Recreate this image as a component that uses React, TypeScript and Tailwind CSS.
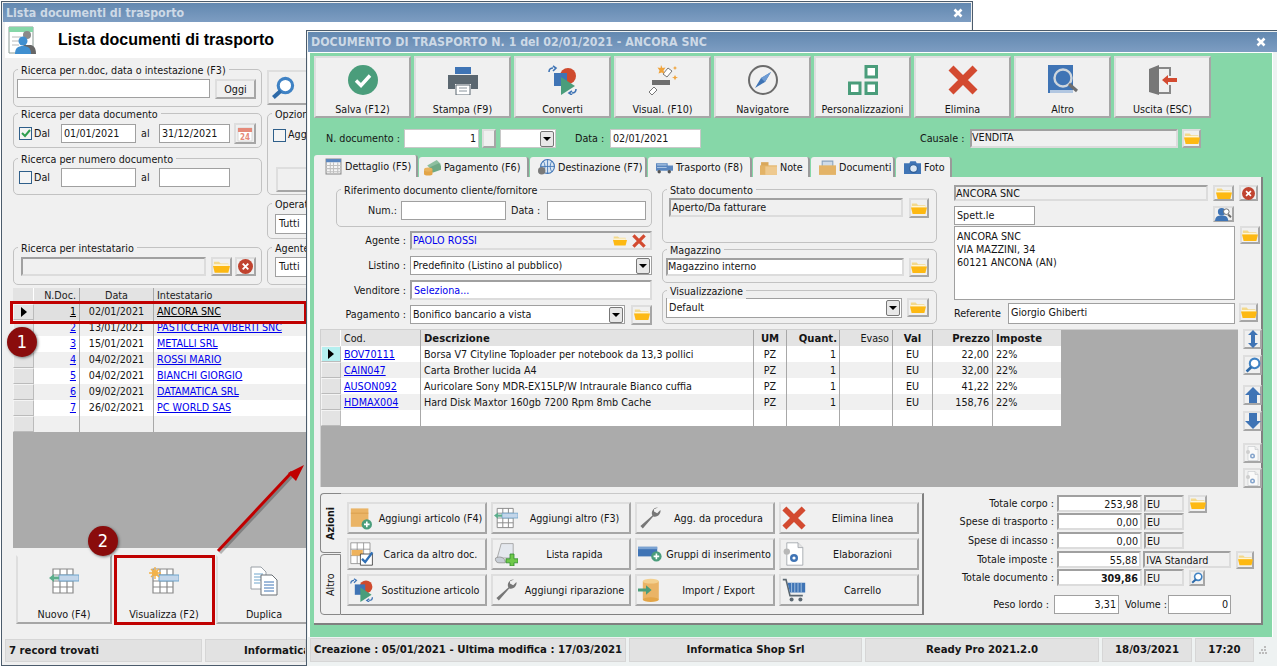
import type { ReactNode } from "react";

const raised =
  "border-2 border-t-[#dedede] border-l-[#dedede] border-r-[#a6a6a6] border-b-[#a6a6a6] bg-[#f0f0f0]";
const sunken =
  "border-2 border-t-[#a0a0a0] border-l-[#a0a0a0] border-r-[#dcdcdc] border-b-[#dcdcdc] bg-[#f0f0f0]";
const field = "border border-[#a0a0a0] bg-white leading-[18px]";

type Box = { className?: string; children?: ReactNode };

function Btn({ className = "", children }: Box) {
  return <div className={`flex shrink-0 items-center justify-center ${raised} ${className}`}>{children}</div>;
}

function Group({ label, className = "", children }: Box & { label: string }) {
  return (
    <div className={`relative shrink-0 rounded-[5px] border border-[#c2c2c2] ${className}`}>
      <span className="absolute left-[4px] top-[-6px] bg-[#f0f0f0] px-[3px] leading-[14px] whitespace-nowrap">{label}</span>
      {children}
    </div>
  );
}

function Svg({ s = 30, children }: { s?: number; children: ReactNode }) {
  return (
    <svg width={s} height={s} viewBox="0 0 30 30" className="shrink-0">
      {children}
    </svg>
  );
}

const Close = () => (
  <svg width="10" height="10" viewBox="0 0 10 10" className="shrink-0">
    <path d="M1.5 1.5l7 7M8.5 1.5l-7 7" stroke="#fff" strokeWidth="2.6" />
  </svg>
);
const Check = () => (
  <Svg>
    <circle cx="15" cy="15" r="15" fill="#4a9d7b" />
    <path d="M8 15.5l5 5 9-10" fill="none" stroke="#fff" strokeWidth="3.4" />
  </Svg>
);
const Printer = () => (
  <Svg>
    <path d="M7 2h16v7H7z" fill="#3f74b5" />
    <path d="M0 10h30v14H23v-5H7v5H0z" fill="#5b6770" />
    <path d="M8 20h14v10H8z" fill="#fff" stroke="#5b6770" />
    <path d="M11 23h8M11 26h8" stroke="#8a949c" />
  </Svg>
);
const Convert = ({ s = 30 }: { s?: number }) => (
  <Svg s={s}>
    <circle cx="20" cy="11" r="8" fill="#cf4a2e" />
    <path d="M6 8h13v13H6z" fill="#3f74b5" />
    <path d="M13 12l14 9-14 9z" fill="#4a9d7b" />
    <path d="M1 7c0-3 2-4 4-4M5 1l3 2-3 3M28 24c0 3-2 4-4 4M24 26l-3 2 3 2" fill="none" stroke="#3f74b5" strokeWidth="1.6" />
  </Svg>
);
const Wand = () => (
  <Svg>
    <path d="M4 15h18v5H4z" fill="#6e6e6e" />
    <path d="M20 3l4 3-5 6-4-3zM6 22l3 3-5 5-3-3z" fill="#fff" stroke="#777" />
    <path d="M13 0l1.5 3 3-.5-2 3 1 3-3-1-3 1 1-3-2-3 3 .5z" fill="#f0a33a" />
    <path d="M27 10l1 2 2 .5-2 .8-1 2-1-2-2-.8 2-.5zM27 1l.8 1.5 1.5.5-1.5.5-.8 1.5-.8-1.5-1.5-.5 1.5-.5z" fill="#f0a33a" />
  </Svg>
);
const Compass = () => (
  <Svg>
    <circle cx="15" cy="15" r="14" fill="none" stroke="#6b6b6b" strokeWidth="2" />
    <path d="M23 7l-6 10-10 6 6-10z" fill="#3f74b5" />
    <path d="M23 7l-10 6 4 4z" fill="#6d9bd4" />
  </Svg>
);
const Squares = () => (
  <Svg>
    <path d="M18 1.5h10.5V12H18zM1.5 18H12v10.5H1.5zM18 18h10.5v10.5H18z" fill="#fff" stroke="#4a9d7b" strokeWidth="3" />
  </Svg>
);
const Cross = ({ s = 30 }: { s?: number }) => (
  <Svg s={s}>
    <path d="M3 3l24 24M27 3L3 27" stroke="#d34a30" strokeWidth="7" />
  </Svg>
);
const BookSearch = () => (
  <Svg>
    <path d="M0 0h25v28H0z" fill="#3f74b5" />
    <path d="M2 25h23v3H2z" fill="#fff" opacity=".6" />
    <circle cx="15" cy="13" r="8.5" fill="#3f74b5" stroke="#cfd6dc" strokeWidth="2.4" />
    <path d="M21 19l8 7" stroke="#6e6e6e" strokeWidth="3" />
  </Svg>
);
const Exit = () => (
  <Svg>
    <path d="M1 4l10-4v30l-10-3z" fill="#777" />
    <path d="M11 3h11v8M22 20v8H11" fill="none" stroke="#888" strokeWidth="2" />
    <path d="M14 15l6-5v3h9v4h-9v3z" fill="#d34a30" />
  </Svg>
);
const Folder = ({ s = 17 }: { s?: number }) => (
  <svg width={s} height={s * 0.8} viewBox="0 0 20 16" className="shrink-0">
    <path d="M1 2h6l2 2h9v4H1z" fill="#f3d98c" />
    <path d="M1 5h17v2H1z" fill="#fff6d8" />
    <path d="M0 7h20l-2 8H2z" fill="#fdb913" />
  </svg>
);
const Cancel = ({ s = 15 }: { s?: number }) => (
  <svg width={s} height={s} viewBox="0 0 16 16" className="shrink-0">
    <circle cx="8" cy="8" r="8" fill="#c0432f" />
    <path d="M5 5l6 6M11 5l-6 6" stroke="#fff" strokeWidth="2" />
  </svg>
);
const Search = ({ s = 18 }: { s?: number }) => (
  <svg width={s} height={s} viewBox="0 0 20 20" className="shrink-0">
    <circle cx="12" cy="8" r="6" fill="#fff" stroke="#3f82c4" strokeWidth="2.6" />
    <path d="M8 12.5L2 18" stroke="#2e6aa8" strokeWidth="3.4" />
  </svg>
);
const TableIco = ({ s = 17 }: { s?: number }) => (
  <svg width={s} height={s} viewBox="0 0 16 16" className="shrink-0">
    <path d="M1 1h14v14H1z" fill="#f6f6f6" stroke="#8a8a8a" />
    <path d="M1 1h14v3H1z" fill="#5a86bf" />
    <path d="M1 7h14M1 10h14M1 13h14M5 4v11M8 4v11M12 4v11" stroke="#c0c0c0" />
  </svg>
);
const Coins = () => (
  <svg width={17} height={17} viewBox="0 0 16 16" className="shrink-0">
    <path d="M3 6l9-5 4 4-9 5z" fill="#8dbf9f" />
    <path d="M5 8l9-4 2 2v4l-8 3z" fill="#6fa985" />
    <ellipse cx="4" cy="10" rx="4" ry="2" fill="#e8b35d" />
    <path d="M0 10v4c0 2 8 2 8 0v-4c0 2-8 2-8 0z" fill="#e3a547" />
  </svg>
);
const Globe = () => (
  <svg width={17} height={17} viewBox="0 0 16 16" className="shrink-0">
    <circle cx="9" cy="7" r="6.5" fill="#dbe7f3" stroke="#3f74b5" />
    <path d="M2.5 7h13M9 .5v13M5 2c2 3 2 7 0 10M13 2c-2 3-2 7 0 10" fill="none" stroke="#3f74b5" strokeWidth=".8" />
    <circle cx="3.5" cy="11" r="3.5" fill="#7a7a7a" />
  </svg>
);
const Truck = () => (
  <svg width={17} height={17} viewBox="0 0 16 16" className="shrink-0">
    <path d="M0 4h11v7H0zM11 6h5v5h-5z" fill="#5a86bf" />
    <path d="M1 5.5h9M1 8h9" stroke="#a9c3e2" />
    <circle cx="3" cy="12" r="1.6" fill="#555" />
    <circle cx="12.5" cy="12" r="1.6" fill="#555" />
  </svg>
);
const TanFolder = ({ photo = false }: { photo?: boolean }) => (
  <svg width={17} height={16} viewBox="0 0 16 15" className="shrink-0">
    {photo && <path d="M3 1h10v6H3z" fill="#cfdbe8" stroke="#8aa2bc" />}
    {!photo && <path d="M1 2h7v4H1z" fill="#d9a85c" />}
    <path d="M0 5h16v9H0z" fill="#e3b367" />
    {!photo && <path d="M5 6h11v8H5z" fill="#eec98f" />}
  </svg>
);
const Camera = () => (
  <svg width={17} height={15} viewBox="0 0 16 14" className="shrink-0">
    <path d="M0 3h5l1-2h5l1 2h4v10H0z" fill="#3f74b5" />
    <circle cx="9" cy="8" r="3.6" fill="#dbe7f3" stroke="#2a5a94" />
  </svg>
);
const Plus = ({ x, y }: { x: number; y: number }) => (
  <g>
    <circle cx={x} cy={y} r="6.5" fill="#4a9d7b" />
    <path d={`M${x - 3.5} ${y}h7M${x} ${y - 3.5}v7`} stroke="#fff" strokeWidth="2" />
  </g>
);
const BoxPlus = () => (
  <Svg s={24}>
    <path d="M1 3h22v23H1z" fill="#eab466" />
    <path d="M1 9h22" stroke="#d69a48" />
    <Plus x={21} y={23} />
  </Svg>
);
const GridArrow = ({ s = 24, sun = false }: { s?: number; sun?: boolean }) => (
  <Svg s={s}>
    <path d="M4 3h20v24H4zM4 9h20M4 15h20M4 21h20M11 3v24M18 3v24" fill="#fff" stroke="#8a8a8a" strokeWidth="1.2" />
    <path d="M10 9h20v6H10z" fill="#c3d6ea" stroke="#6fa5cc" />
    {sun ? (
      <g>
        <path d="M6 1v12M0 7h12M2 3l8 8M10 3l-8 8" stroke="#f3b34a" strokeWidth="1.4" />
        <circle cx="6" cy="7" r="3" fill="#f3b34a" />
      </g>
    ) : (
      <path d="M0 12l5-4v2.5h5v3H5V16z" fill="#5cae8c" />
    )}
  </Svg>
);
const Wrench = () => (
  <Svg s={24}>
    <path d="M25 2a7 7 0 0 0-7 10L3 25l3 3 13-15a7 7 0 0 0 9-8l-4 4-4-2 0-3z" fill="#777" />
  </Svg>
);
const GridCheck = () => (
  <Svg s={24}>
    <path d="M1 1h24v26H1zM1 9h24M1 17h24M9 1v26M17 1v26" fill="#fff" stroke="#8a8a8a" />
    <path d="M2 10h14v7H2z" fill="#eeb25c" />
    <path d="M13 15h15v14H13z" fill="#fff" stroke="#333" />
    <path d="M15 21l4 4 9-12" fill="none" stroke="#2f6fb5" strokeWidth="3" />
  </Svg>
);
const ScrollPlus = () => (
  <Svg s={24}>
    <path d="M9 2h15v18H4z" fill="#e4e8ee" stroke="#9a9a9a" />
    <path d="M2 20c4-2 10-2 12 4v2H6c-3 0-5-3-4-6z" fill="#c8ced6" stroke="#8f8f8f" />
    <path d="M20 15h5v6h5v5h-5v4h-5v-4h-5v-5h5z" fill="#6fc84a" stroke="#2f8a2f" />
  </Svg>
);
const RectPlus = () => (
  <Svg s={24}>
    <path d="M0 6h24v12H0z" fill="#3f74b5" />
    <path d="M0 6h24v3H0z" fill="#7aa2d2" />
    <Plus x={23} y={18} />
  </Svg>
);
const PageGear = ({ s = 24, faded = false }: { s?: number; faded?: boolean }) => (
  <Svg s={s}>
    <g opacity={faded ? 0.6 : 1}>
      <path d="M6 1h14l6 6v22H6z" fill="#fff" stroke="#9aa0a6" />
      <path d="M20 1v6h6" fill="#e4e4e4" stroke="#9aa0a6" />
      <circle cx="6" cy="12" r="4" fill="#b8b8b8" />
      <circle cx="15" cy="20" r="5" fill="#3f74b5" />
      <circle cx="15" cy="20" r="2" fill="#fff" />
    </g>
  </Svg>
);
const CylArrow = () => (
  <Svg s={24}>
    <path d="M6 4h20v23H6z" fill="#eab466" />
    <ellipse cx="16" cy="4" rx="10" ry="3" fill="#f3d08f" />
    <ellipse cx="16" cy="27" rx="10" ry="3" fill="#e3a547" />
    <path d="M0 13h10v-4l7 6-7 6v-4H0z" fill="#4a9d7b" />
  </Svg>
);
const Cart = () => (
  <Svg s={24}>
    <path d="M1 2h4l5 20h16" fill="none" stroke="#5b6770" strokeWidth="2" />
    <path d="M7 6h22v12H10z" fill="#3f74b5" />
    <path d="M12 6v12M16 6v12M20 6v12M24 6v12" stroke="#b8cfe8" />
    <circle cx="12" cy="27" r="2.5" fill="#5b6770" />
    <circle cx="23" cy="27" r="2.5" fill="#5b6770" />
  </Svg>
);
const UserSearch = () => (
  <svg width={17} height={14} viewBox="0 0 18 15" className="shrink-0">
    <circle cx="7" cy="5" r="4" fill="#3f74b5" />
    <path d="M0 15c0-5 3-6 7-6s7 1 7 6z" fill="#3f74b5" />
    <circle cx="12" cy="5" r="3" fill="#fff" stroke="#666" />
    <path d="M14 8l3 3" stroke="#666" strokeWidth="2" />
  </svg>
);
const ArrowV = ({ up }: { up: boolean }) => (
  <svg width={16} height={16} viewBox="0 0 16 16" className="shrink-0">
    <path d={up ? "M8 0l8 8h-4v8H4V8H0z" : "M8 16L0 8h4V0h8v8h4z"} fill="#3f74b5" />
  </svg>
);
const UpDown = () => (
  <svg width={10} height={18} viewBox="0 0 10 18" className="shrink-0">
    <path d="M5 0l5 5H7v8h3l-5 5-5-5h3V5H0z" fill="#3f74b5" />
  </svg>
);
const Calendar = () => (
  <svg width={16} height={16} viewBox="0 0 16 16" className="shrink-0">
    <path d="M1 2h14v13H1z" fill="#fff" stroke="#d8d8d8" />
    <path d="M1 2h14v4H1z" fill="#e58a7a" />
    <text x="8" y="14" textAnchor="middle" fontSize="8" fontWeight="700" fill="#e58a7a">24</text>
  </svg>
);
const Clipboard = () => (
  <svg width={30} height={28} viewBox="0 0 30 28" className="shrink-0">
    <path d="M1 1h24v26H1z" fill="#fff" stroke="#8a9a94" />
    <path d="M1 1h24v5H1z" fill="#86d7a8" />
    <path d="M4 11h9M4 15h8M4 19h7" stroke="#b8b8b8" />
    <circle cx="19" cy="9" r="4" fill="#8a8a8a" />
    <path d="M12 28c0-7 3-9 5-9h5c3 0 6 2 6 9z" fill="#666" />
    <circle cx="15" cy="15" r="4.5" fill="#3f8fd0" />
    <path d="M7 28c0-6 3-8 8-8s8 2 8 8z" fill="#3f8fd0" />
  </svg>
);
const Duplicate = () => (
  <svg width={28} height={30} viewBox="0 0 28 30" className="shrink-0">
    <path d="M1 1h10l5 5v17H1z" fill="#fff" stroke="#9aa0a6" />
    <path d="M4 8h9M4 11h9M4 14h9M4 17h6" stroke="#6fa5cc" />
    <path d="M11 9h11l5 5v15H11z" fill="#fff" stroke="#6a7076" />
    <path d="M14 16h10M14 19h10M14 22h10M14 25h10" stroke="#3f74b5" />
  </svg>
);

const Combo = ({ className = "", text = "" }: { className?: string; text?: string }) => (
  <div className={`flex shrink-0 items-center justify-between pl-[2px] pr-[1px] ${field} ${className}`}>
    <span>{text}</span>
    <span className="flex h-[16px] w-[14px] items-center justify-center rounded-[2px] border border-[#777] bg-[#e8e8e8]">
      <span className="h-0 w-0 border-x-[4px] border-t-[4px] border-x-transparent border-t-black" />
    </span>
  </div>
);

const Tick = ({ on = false }: { on?: boolean }) => (
  <span className="flex h-[13px] w-[13px] shrink-0 items-center justify-center border border-[#2f5f8a] bg-[#f4f4f4]">
    {on && (
      <svg width="10" height="9" viewBox="0 0 10 9">
        <path d="M1 4l3 3 5-6" fill="none" stroke="#2f9e4f" strokeWidth="2" />
      </svg>
    )}
  </span>
);

const listRows: [string, string, string][] = [
  ["1", "02/01/2021", "ANCORA SNC"],
  ["2", "13/01/2021", "PASTICCERIA VIBERTI SNC"],
  ["3", "15/01/2021", "METALLI SRL"],
  ["4", "04/02/2021", "ROSSI MARIO"],
  ["5", "04/02/2021", "BIANCHI GIORGIO"],
  ["6", "09/02/2021", "DATAMATICA SRL"],
  ["7", "26/02/2021", "PC WORLD SAS"],
  ["", "", ""],
];

function ListWindow() {
  return (
    <div className="absolute left-[1px] top-[1px] flex h-[665px] w-[972px] flex-col border border-[#4c5c6c] bg-[#f0f0f0] p-[1px]">
      <div className="flex h-[19px] shrink-0 items-center justify-between bg-linear-to-b from-[#6288b0] to-[#7d9dc2] pl-[3px] pr-[8px] text-[12.3px] font-bold text-[#cdd9e6]">
        <span>Lista documenti di trasporto</span>
        <Close />
      </div>
      <div className="ml-[2px] flex h-[36px] shrink-0 items-center bg-white pl-[3px]">
        <Clipboard />
        <span className="ml-[20px] font-['Liberation_Sans',sans-serif] text-[16px] font-bold text-black">Lista documenti di trasporto</span>
      </div>
      <div className="ml-[10px] mt-[11px] flex">
        <div className="flex w-[249px] shrink-0 flex-col">
          <Group label="Ricerca per n.doc, data o intestazione (F3)" className="h-[38px]">
            <div className="ml-[3px] mt-[9px] flex">
              <div className={`h-[19px] w-[193px] ${field}`} />
              <Btn className="ml-[5px] h-[20px] w-[41px] pt-[1px]">Oggi</Btn>
            </div>
          </Group>
          <Group label="Ricerca per data documento" className="mt-[6px] h-[35px]">
            <div className="ml-[5px] mt-[9px] flex items-center">
              <Tick on />
              <span className="ml-[2px] w-[27px] pt-[1px]">Dal</span>
              <div className={`h-[19px] w-[75px] pl-[2px] ${field}`}>01/01/2021</div>
              <span className="ml-[5px] w-[18px]">al</span>
              <div className={`h-[19px] w-[71px] pl-[2px] ${field}`}>31/12/2021</div>
              <Btn className="ml-[4px] h-[21px] w-[22px]">
                <Calendar />
              </Btn>
            </div>
          </Group>
          <Group label="Ricerca per numero documento" className="mt-[10px] h-[37px]">
            <div className="ml-[5px] mt-[9px] flex items-center">
              <Tick />
              <span className="ml-[2px] w-[27px] pt-[1px]">Dal</span>
              <div className={`h-[19px] w-[75px] ${field}`} />
              <span className="ml-[5px] w-[18px]">al</span>
              <div className={`h-[19px] w-[71px] ${field}`} />
            </div>
          </Group>
          <Group label="Ricerca per intestatario" className="mt-[52px] h-[38px]">
            <div className="ml-[7px] mt-[9px] flex">
              <div className={`h-[19px] w-[185px] ${sunken}`} />
              <Btn className="ml-[5px] h-[19px] w-[21px]">
                <Folder />
              </Btn>
              <Btn className="ml-[3px] h-[19px] w-[21px]">
                <Cancel />
              </Btn>
            </div>
          </Group>
        </div>
        <div className="ml-[5px] flex w-[300px] shrink-0 flex-col">
          <Btn className="mt-[1px] h-[35px] w-[60px] justify-start pl-[2px]">
            <Search s={24} />
          </Btn>
          <Group label="Opzioni" className="mt-[8px] h-[82px]">
            <div className="ml-[5px] mt-[13px] flex items-center gap-[2px]">
              <Tick />
              <span>Agg</span>
            </div>
            <Btn className="ml-[8px] mt-[24px] h-[25px] w-[200px]" />
          </Group>
          <Group label="Operatore" className="mt-[8px] h-[36px]">
            <div className={`ml-[7px] mt-[10px] h-[20px] w-[200px] pl-[3px] ${field}`}>Tutti</div>
          </Group>
          <Group label="Agente" className="mt-[8px] h-[38px]">
            <div className={`ml-[7px] mt-[9px] h-[20px] w-[200px] pl-[3px] ${field}`}>Tutti</div>
          </Group>
        </div>
      </div>
      <div className="ml-[10px] mt-[3px] flex h-[260px] w-[700px] shrink-0 flex-col bg-[#ababab]">
        <div className="grid h-[16px] grid-cols-[21px_46px_74px_1fr] bg-[#e3e3e3] text-[#222]">
          <span className="border-r border-[#fff]" />
          <span className="border-r border-[#a8a8a8] pr-[3px] text-right">N.Doc.</span>
          <span className="border-r border-[#a8a8a8] text-center">Data</span>
          <span className="pl-[3px]">Intestatario</span>
        </div>
        {listRows.map((r, i) => (
          <div
            key={i}
            className={`grid h-[16px] grid-cols-[21px_46px_74px_1fr] leading-[16px] ${
              i === 0 ? "bg-[#e0e0e0]" : i % 2 === 0 ? "bg-white" : "bg-[#f0f0f0]"
            }`}
          >
            <span className="flex items-center justify-center border border-b-[#bbb] border-l-[#f4f4f4] border-r-[#bbb] border-t-[#f4f4f4] bg-[#e3e3e3]">
              {i === 0 && <span className="h-0 w-0 border-y-[5px] border-l-[6px] border-y-transparent border-l-black" />}
            </span>
            <span className={`border-r border-[#a8a8a8] pr-[3px] text-right underline ${i === 0 ? "text-black" : "text-[#0000ee]"}`}>{r[0]}</span>
            <span className="border-r border-[#a8a8a8] text-center">{r[1]}</span>
            <span className={`pl-[3px] underline ${i === 0 ? "text-black" : "text-[#0000ee]"}`}>{r[2]}</span>
          </div>
        ))}
      </div>
      <div className="ml-[13px] mt-[7px] flex h-[69px] shrink-0 gap-[2px]">
        {[
          { t: "Nuovo (F4)", w: "w-[96px]", i: <GridArrow s={30} /> },
          { t: "Visualizza (F2)", w: "w-[100px]", i: <GridArrow s={30} sun /> },
          { t: "Duplica", w: "w-[96px]", i: <Duplicate /> },
        ].map((b) => (
          <Btn key={b.t} className={`${b.w} flex-col justify-start gap-[12px] border-t-[#f0f0f0] pt-[9px]`}>
            {b.i}
            <span className="leading-[14px]">{b.t}</span>
          </Btn>
        ))}
      </div>
      <div className="ml-[2px] mt-[15px] flex h-[23px] shrink-0 gap-[3px] text-[11.3px] font-bold">
        <div className="flex w-[197px] items-center border border-[#d6d6d6] bg-[#e2e2e2] pl-[3px]">7 record trovati</div>
        <div className="flex w-[101px] items-center overflow-hidden border border-[#d6d6d6] bg-[#e2e2e2] pl-[38px] whitespace-nowrap">Informatica</div>
      </div>
    </div>
  );
}

const toolbar: [string, ReactNode][] = [
  ["Salva (F12)", <Check />],
  ["Stampa (F9)", <Printer />],
  ["Converti", <Convert />],
  ["Visual. (F10)", <Wand />],
  ["Navigatore", <Compass />],
  ["Personalizzazioni", <Squares />],
  ["Elimina", <Cross />],
  ["Altro", <BookSearch />],
  ["Uscita (ESC)", <Exit />],
];

const tabs: [string, string, ReactNode][] = [
  ["Dettaglio (F5)", "w-[104px] pl-[11px]", <TableIco />],
  ["Pagamento (F6)", "w-[110px] pl-[5px]", <Coins />],
  ["Destinazione (F7)", "w-[117px] pl-[8px]", <Globe />],
  ["Trasporto (F8)", "w-[104px] pl-[8px]", <Truck />],
  ["Note", "w-[57px] pl-[7px]", <TanFolder />],
  ["Documenti", "w-[84px] pl-[8px]", <TanFolder photo />],
  ["Foto", "w-[56px] pl-[8px]", <Camera />],
];

const lines = [
  ["BOV70111", "Borsa V7 Cityline Toploader per notebook da 13,3 pollici", "PZ", "1", "", "EU", "22,00", "22%"],
  ["CAIN047", "Carta Brother lucida A4", "PZ", "1", "", "EU", "32,00", "22%"],
  ["AUSON092", "Auricolare Sony MDR-EX15LP/W Intraurale Bianco cuffia", "PZ", "1", "", "EU", "41,22", "22%"],
  ["HDMAX004", "Hard Disk Maxtor 160gb 7200 Rpm 8mb Cache", "PZ", "1", "", "EU", "158,76", "22%"],
  ["", "", "", "", "", "", "", ""],
];

const actions: [string, ReactNode][] = [
  ["Aggiungi articolo (F4)", <BoxPlus />],
  ["Aggiungi altro (F3)", <GridArrow />],
  ["Agg. da procedura", <Wrench />],
  ["Elimina linea", <Cross s={24} />],
  ["Carica da altro doc.", <GridCheck />],
  ["Lista rapida", <ScrollPlus />],
  ["Gruppi di inserimento", <RectPlus />],
  ["Elaborazioni", <PageGear />],
  ["Sostituzione articolo", <Convert s={24} />],
  ["Aggiungi riparazione", <Wrench />],
  ["Import / Export", <CylArrow />],
  ["Carrello", <Cart />],
];

const cols = "grid-cols-[20px_80px_333px_33px_53px_53px_40px_60px_68px] grid-rows-[16px]";

function TotalRow({ label, value, unit, bold, wide, after, mt }: { label: string; value: string; unit: string; bold?: boolean; wide?: boolean; after?: ReactNode; mt: string }) {
  return (
    <div className={`flex h-[17px] items-center ${mt}`}>
      <span className="w-[130px] pt-[1px] text-right whitespace-nowrap">{label}</span>
      <div className={`ml-[3px] h-[17px] w-[85px] pr-[2px] text-right leading-[15px] ${sunken} bg-white ${bold ? "font-bold" : ""}`}>{value}</div>
      <div className={`ml-[2px] h-[17px] pl-[1px] leading-[15px] ${sunken} ${wide ? "w-[88px]" : "w-[40px]"}`}>{unit}</div>
      {after}
    </div>
  );
}

function DocWindow() {
  return (
    <div className="absolute left-[306px] top-[30px] flex h-[636px] w-[971px] flex-col border-l border-t border-[#4c5c6c] bg-[#eef2f2] pl-[1px] pt-[1px]">
      <div className="flex h-[20px] shrink-0 items-center justify-between bg-linear-to-b from-[#6288b0] to-[#7d9dc2] pl-[3px] pr-[11px] text-[12.3px] font-bold text-[#cdd9e6]">
        <span>DOCUMENTO DI TRASPORTO N. 1 del 02/01/2021 - ANCORA SNC</span>
        <Close />
      </div>
      <div className="flex h-[585px] w-[965px] shrink-0 flex-col border-l-2 border-r border-t border-white bg-[#86d7a8] pl-[2px]">
        <div className="ml-[2px] mt-[3px] flex gap-[3px]">
          {toolbar.map(([t, icon]) => (
            <Btn key={t} className="h-[62px] w-[97px] flex-col gap-[8px] pt-[7px]">
              {icon}
              <span className="leading-[14px]">{t}</span>
            </Btn>
          ))}
        </div>
        <div className="mt-[11px] flex h-[19px] items-center">
          <span className="ml-[14px] w-[78px] whitespace-nowrap">N. documento :</span>
          <div className={`h-[19px] w-[75px] pr-[2px] text-right ${field} border-[#c8c8c8]`}>1</div>
          <div className={`ml-[3px] h-[19px] w-[14px] ${raised}`} />
          <Combo className="ml-[4px] h-[19px] w-[56px] border-[#c8c8c8]" />
          <span className="ml-[19px] w-[35px]">Data :</span>
          <div className={`h-[19px] w-[91px] pl-[2px] ${field} border-[#c8c8c8]`}>02/01/2021</div>
          <span className="ml-[219px] w-[50px]">Causale :</span>
          <div className={`h-[19px] w-[208px] leading-[14px] ${sunken}`}>VENDITA</div>
          <Btn className="ml-[4px] h-[19px] w-[19px]">
            <Folder s={16} />
          </Btn>
        </div>
        <div className="ml-[2px] mt-[7px] flex h-[22px] items-end gap-[1px]">
          {tabs.map(([t, w, icon], i) => (
            <div
              key={t}
              className={`flex shrink-0 items-center gap-[3px] rounded-t-[3px] border-r-2 border-[#9a9a9a] bg-[#f0f0f0] pt-[1px] ${w} ${i === 0 ? "h-[22px]" : "h-[20px]"}`}
            >
              {icon}
              <span className="whitespace-nowrap pt-[1px]">{t}</span>
            </div>
          ))}
        </div>
        <div className="ml-[2px] flex h-[448px] w-[949px] shrink-0 flex-col border-b-2 border-r-2 border-[#808080] bg-[#f0f0f0]">
          <div className="flex h-[152px] shrink-0">
            <div className="ml-[22px] mt-[12px] flex w-[316px] shrink-0 flex-col">
              <Group label="Riferimento documento cliente/fornitore" className="h-[38px]">
                <div className="mt-[11px] flex items-center">
                  <span className="ml-[31px] w-[33px]">Num.:</span>
                  <div className={`h-[19px] w-[105px] ${field} border-[#555]`} />
                  <span className="ml-[5px] w-[36px]">Data :</span>
                  <div className={`h-[19px] w-[99px] ${field} border-[#555]`} />
                </div>
              </Group>
              <div className="mt-[4px] flex h-[19px] items-center">
                <span className="w-[74px] pr-[4px] pt-[1px] text-right whitespace-nowrap">Agente :</span>
                <div className={`flex h-[19px] w-[242px] items-center justify-between pl-[1px] pr-[4px] text-[#0000ee] ${sunken}`}>
                  <span className="pt-[1px]">PAOLO ROSSI</span>
                  <span className="flex items-center gap-[5px]">
                    <Folder s={14} />
                    <Cross s={14} />
                  </span>
                </div>
              </div>
              <div className="mt-[6px] flex h-[19px] items-center">
                <span className="w-[74px] pr-[4px] pt-[1px] text-right whitespace-nowrap">Listino :</span>
                <Combo className="h-[19px] w-[242px]" text="Predefinito (Listino al pubblico)" />
              </div>
              <div className="mt-[5px] flex h-[20px] items-center">
                <span className="w-[74px] pr-[4px] pt-[1px] text-right whitespace-nowrap">Venditore :</span>
                <div className={`h-[20px] w-[242px] pl-[2px] text-[#0000ee] leading-[18px] ${sunken} bg-white`}>Seleziona...</div>
              </div>
              <div className="mt-[5px] flex h-[19px] items-center">
                <span className="w-[74px] pr-[4px] pt-[1px] text-right whitespace-nowrap">Pagamento :</span>
                <Combo className="h-[19px] w-[215px]" text="Bonifico bancario a vista" />
                <Btn className="ml-[6px] h-[20px] w-[21px]">
                  <Folder s={16} />
                </Btn>
              </div>
            </div>
            <div className="ml-[10px] mt-[12px] flex w-[275px] shrink-0 flex-col">
              <Group label="Stato documento" className="h-[54px]">
                <div className="ml-[6px] mt-[8px] flex">
                  <div className={`h-[19px] w-[234px] pl-[1px] ${sunken}`}>Aperto/Da fatturare</div>
                  <Btn className="ml-[6px] h-[20px] w-[20px]">
                    <Folder s={16} />
                  </Btn>
                </div>
              </Group>
              <Group label="Magazzino" className="mt-[6px] h-[34px]">
                <div className="ml-[3px] mt-[8px] flex">
                  <div className={`h-[18px] w-[238px] leading-[14px] ${sunken} bg-white`}>Magazzino interno</div>
                  <Btn className="ml-[5px] h-[19px] w-[20px]">
                    <Folder s={16} />
                  </Btn>
                </div>
              </Group>
              <Group label="Visualizzazione" className="mt-[7px] h-[34px]">
                <div className="ml-[3px] mt-[7px] flex">
                  <Combo className="h-[20px] w-[236px]" text="Default" />
                  <Btn className="ml-[5px] h-[19px] w-[22px]">
                    <Folder s={16} />
                  </Btn>
                </div>
              </Group>
            </div>
            <div className="ml-[17px] mt-[8px] flex w-[306px] shrink-0 flex-col">
              <div className="flex h-[16px]">
                <div className={`h-[16px] w-[254px] leading-[14px] ${sunken}`}>ANCORA SNC</div>
                <Btn className="ml-[5px] h-[16px] w-[21px]">
                  <Folder s={16} />
                </Btn>
                <Btn className="ml-[5px] h-[16px] w-[19px]">
                  <Cancel s={13} />
                </Btn>
              </div>
              <div className="mt-[5px] flex h-[19px]">
                <div className={`h-[19px] w-[81px] pl-[2px] ${field}`}>Spett.le</div>
                <Btn className="ml-[178px] h-[16px] w-[21px]">
                  <UserSearch />
                </Btn>
              </div>
              <div className="mt-[1px] flex h-[74px]">
                <div className="h-[74px] w-[281px] border border-[#a0a0a0] bg-white pl-[2px] pt-[3px] leading-[13px]">
                  ANCORA SNC
                  <br />
                  VIA MAZZINI, 34
                  <br />
                  60121 ANCONA (AN)
                </div>
                <Btn className="ml-[5px] h-[18px] w-[20px]">
                  <Folder s={16} />
                </Btn>
              </div>
              <div className="mt-[3px] flex h-[21px] items-center">
                <span className="w-[54px] pt-[1px]">Referente</span>
                <div className={`h-[21px] w-[227px] pl-[2px] ${field}`}>Giorgio Ghiberti</div>
                <Btn className="ml-[4px] h-[19px] w-[19px] self-start">
                  <Folder s={16} />
                </Btn>
              </div>
            </div>
          </div>
          <div className="ml-[6px] flex h-[158px] shrink-0">
            <div className="h-[158px] w-[918px] shrink-0 border-l border-t border-[#d0d0d0] bg-[#ababab]">
              <div className={`grid h-[16px] w-[740px] ${cols} bg-[#e3e3e3] text-[11.2px] font-bold leading-[18px]`}>
                <span className="border-r border-white" />
                <span className="border-r border-[#a8a8a8] pl-[3px] text-[10.7px] font-normal">Cod.</span>
                <span className="border-r border-[#a8a8a8] pl-[3px]">Descrizione</span>
                <span className="border-r border-[#a8a8a8] text-center">UM</span>
                <span className="border-r border-[#a8a8a8] pr-[2px] text-right">Quant.</span>
                <span className="border-r border-[#a8a8a8] pr-[3px] text-right text-[10.7px] font-normal">Evaso</span>
                <span className="border-r border-[#a8a8a8] text-center">Val</span>
                <span className="border-r border-[#a8a8a8] pr-[2px] text-right">Prezzo</span>
                <span className="pl-[3px]">Imposte</span>
              </div>
              {lines.map((l, i) => (
                <div key={i} className={`grid h-[16px] w-[740px] ${cols} leading-[18px] ${i % 2 === 0 ? "bg-white" : "bg-[#f0f0f0]"}`}>
                  <span className={`flex items-center justify-center border border-b-[#bbb] border-l-[#f4f4f4] border-r-[#bbb] border-t-[#f4f4f4] ${i === 0 ? "bg-[#b5efef]" : "bg-[#e3e3e3]"}`}>
                    {i === 0 && <span className="h-0 w-0 border-y-[5px] border-l-[6px] border-y-transparent border-l-black" />}
                  </span>
                  <span className="border-r border-[#a8a8a8] pl-[3px] text-[#0000ee] underline">{l[0]}</span>
                  <span className="overflow-hidden border-r border-[#a8a8a8] pl-[3px] whitespace-nowrap">{l[1]}</span>
                  <span className="border-r border-[#a8a8a8] text-center">{l[2]}</span>
                  <span className="border-r border-[#a8a8a8] pr-[3px] text-right">{l[3]}</span>
                  <span className="border-r border-[#a8a8a8]">{l[4]}</span>
                  <span className="border-r border-[#a8a8a8] text-center">{l[5]}</span>
                  <span className="border-r border-[#a8a8a8] pr-[3px] text-right">{l[6]}</span>
                  <span className="pl-[3px]">{l[7]}</span>
                </div>
              ))}
            </div>
            <div className="ml-[5px] flex w-[19px] shrink-0 flex-col items-center">
              <Btn className="h-[20px] w-[19px]"><UpDown /></Btn>
              <Btn className="mt-[6px] h-[20px] w-[19px]"><Search s={16} /></Btn>
              <Btn className="mt-[10px] h-[20px] w-[19px]"><ArrowV up /></Btn>
              <Btn className="mt-[6px] h-[20px] w-[19px]"><ArrowV up={false} /></Btn>
              <Btn className="mt-[12px] h-[20px] w-[19px]"><PageGear s={15} faded /></Btn>
              <Btn className="mt-[5px] h-[20px] w-[19px]"><PageGear s={15} faded /></Btn>
            </div>
          </div>
          <div className="ml-[6px] mt-[6px] flex">
            <div className="flex h-[122px] w-[604px] shrink-0">
              <div className="flex w-[21px] shrink-0 flex-col">
                <div className="flex h-[60px] rotate-180 items-center justify-center rounded-r-[4px] border border-l-0 border-[#888] bg-[#f0f0f0] font-bold [writing-mode:vertical-rl]">Azioni</div>
                <div className="mt-[1px] flex h-[61px] rotate-180 items-center justify-center rounded-r-[4px] border border-[#888] bg-[#f0f0f0] [writing-mode:vertical-rl]">Altro</div>
              </div>
              <div className="grid flex-1 grid-cols-[140px_140px_140px_140px] content-start gap-x-[4px] gap-y-[4px] border-y border-r-2 border-[#c8c8c8] border-r-[#808080] border-b-[#808080] pl-[6px] pt-[8px]">
                {actions.map(([t, icon]) => (
                  <Btn key={t} className="h-[32px] justify-start gap-[2px] pl-[1px]">
                    {icon}
                    <span className="flex-1 pt-[1px] text-center whitespace-nowrap">{t}</span>
                  </Btn>
                ))}
              </div>
            </div>
            <div className="flex w-[330px] shrink-0 flex-col pt-[2px]">
              <TotalRow
                label="Totale corpo :"
                value="253,98"
                unit="EU"
                mt=""
                after={
                  <Btn className="ml-[4px] h-[18px] w-[19px]">
                    <Folder s={16} />
                  </Btn>
                }
              />
              <TotalRow label="Spese di trasporto :" value="0,00" unit="EU" mt="mt-[1px]" />
              <TotalRow label="Spese di incasso :" value="0,00" unit="EU" mt="mt-[2px]" />
              <TotalRow
                label="Totale imposte :"
                value="55,88"
                unit="IVA Standard"
                wide
                mt="mt-[2px]"
                after={
                  <Btn className="ml-[5px] h-[18px] w-[18px]">
                    <Folder s={15} />
                  </Btn>
                }
              />
              <TotalRow
                label="Totale documento :"
                value="309,86"
                unit="EU"
                bold
                mt="mt-[1px]"
                after={
                  <Btn className="ml-[5px] h-[16px] w-[16px]">
                    <Search s={12} />
                  </Btn>
                }
              />
              <div className="mt-[9px] flex h-[19px] items-center">
                <span className="w-[125px] text-right whitespace-nowrap">Peso lordo :</span>
                <div className={`ml-[5px] h-[19px] w-[65px] pr-[2px] text-right ${field}`}>3,31</div>
                <span className="ml-[6px] w-[43px] whitespace-nowrap">Volume :</span>
                <div className={`h-[19px] w-[63px] pr-[2px] text-right ${field}`}>0</div>
              </div>
            </div>
          </div>
        </div>
      </div>
      <div className="ml-[2px] mt-[1px] flex h-[24px] shrink-0 items-center gap-[3px] text-[11.3px] font-bold">
        <div className="flex h-[24px] w-[316px] items-center border border-[#d6d6d6] bg-[#e2e2e2] pl-[3px] whitespace-nowrap">Creazione : 05/01/2021 - Ultima modifica : 17/03/2021</div>
        <div className="flex h-[24px] w-[233px] items-center justify-center border border-[#d6d6d6] bg-[#e2e2e2]">Informatica Shop Srl</div>
        <div className="flex h-[24px] w-[234px] items-center justify-center border border-[#d6d6d6] bg-[#e2e2e2]">Ready Pro 2021.2.0</div>
        <div className="flex h-[24px] w-[90px] items-center justify-center border border-[#d6d6d6] bg-[#e2e2e2]">18/03/2021</div>
        <div className="flex h-[24px] w-[59px] items-center justify-center border border-[#d6d6d6] bg-[#e2e2e2]">17:20</div>
        <svg width="8" height="8" viewBox="0 0 8 8" className="ml-[2px] shrink-0">
          <path d="M5 0h2v2H5zM2 3h2v2H2zM5 3h2v2H5zM0 6h2v2H0zM3 6h2v2H3zM6 6h2v2H6z" fill="#bcbcbc" />
        </svg>
      </div>
    </div>
  );
}

const Badge = ({ n, className }: { n: string; className: string }) => (
  <div className={`absolute flex h-[30px] w-[30px] items-center justify-center rounded-full bg-[#8a0c0c] text-[18px] text-white shadow-[1px_1px_3px_rgba(0,0,0,0.5)] ${className}`}>{n}</div>
);

export default function App() {
  return (
    <div className="relative h-[666px] w-[1277px] overflow-hidden bg-white font-['DejaVu_Sans_Condensed','Liberation_Sans',sans-serif] text-[10.7px] leading-[16px] text-[#151515]">
      <ListWindow />
      <div className="absolute left-[10px] top-[301px] h-[23px] w-[297px] border-[3px] border-[#c00000]" />
      <div className="absolute left-[114px] top-[555px] h-[70px] w-[101px] border-[3px] border-[#c00000]" />
      <Badge n="1" className="left-[7px] top-[327px]" />
      <Badge n="2" className="left-[88px] top-[526px]" />
      <DocWindow />
      <svg width="100" height="100" viewBox="0 0 100 100" className="absolute left-[212px] top-[460px]">
        <path d="M8 93L82 14" stroke="#00000040" strokeWidth="3" />
        <path d="M6 91L80 12" stroke="#c00000" strokeWidth="3" />
        <path d="M92 5L76 13l8 8z" fill="#c00000" />
      </svg>
    </div>
  );
}
